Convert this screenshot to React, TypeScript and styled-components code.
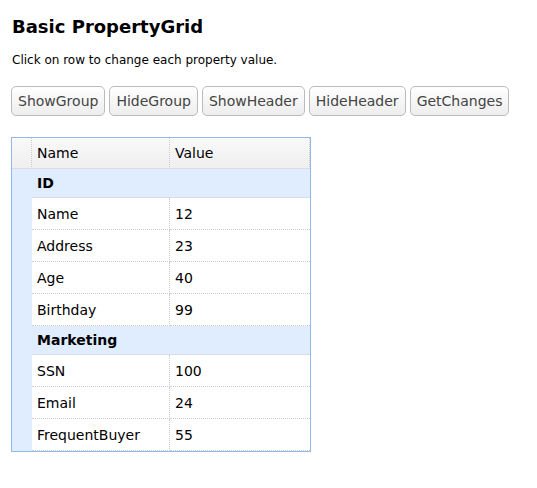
import * as React from 'react';
import styled, { createGlobalStyle } from 'styled-components';

const GlobalStyle = createGlobalStyle`
  body {
    margin: 0;
    padding: 0 11px;
    background: #fff;
    font-family: "DejaVu Sans", Verdana, sans-serif;
    color: #000;
  }
`;

const Page = styled.div`
  display: flex;
  flex-direction: column;
  padding-top: 16px;
`;

const Title = styled.h2`
  margin: 0;
  font-size: 18px;
  font-weight: bold;
  line-height: 22px;
  padding-left: 1px;
`;

const Intro = styled.p`
  margin: 14px 0 0 1px;
  font-size: 12px;
  line-height: 16px;
`;

const Toolbar = styled.div`
  display: flex;
  gap: 4px;
  margin-top: 18px;
`;

const Button = styled.button`
  height: 30px;
  padding: 0 6px;
  font-family: inherit;
  font-size: 14px;
  color: #444;
  background: linear-gradient(to bottom, #ffffff 0%, #ededed 100%);
  border: 1px solid #bbb;
  border-radius: 5px;
  cursor: pointer;
`;

const Grid = styled.div`
  width: 298px;
  margin-top: 21px;
  border: 1px solid #95b8e7;
  display: grid;
  grid-template-columns: 20px 138px 1fr;
  font-size: 14px;
`;

const HeadCell = styled.div`
  height: 31px;
  display: flex;
  align-items: center;
  padding-left: 5px;
  background: linear-gradient(to bottom, #f9f9f9 0%, #efefef 100%);
  border-right: 1px dotted #ccc;
  border-bottom: 1px solid #dddddd;
  box-sizing: border-box;
  &:last-child {
    border-right: none;
  }
`;

const Corner = styled(HeadCell)`
  padding: 0;
`;

const Indent = styled.div`
  background: #e0ecff;
`;

const GroupRow = styled.div`
  grid-column: 2 / 4;
  height: 28px;
  display: flex;
  align-items: center;
  padding-left: 5px;
  background: #e0ecff;
  font-weight: bold;
  border-bottom: 1px solid #d5dde8;
`;

const Cell = styled.div<{ $last?: boolean }>`
  height: 32px;
  box-sizing: border-box;
  display: flex;
  align-items: center;
  padding-left: 5px;
  background: #fff;
  border-bottom: 1px dotted #ccc;
  border-right: ${({ $last }) => ($last ? 'none' : '1px dotted #ccc')};
`;

type Row = { name: string; value: string };
type Group = { title: string; rows: Row[] };

const groups: Group[] = [
  {
    title: 'ID',
    rows: [
      { name: 'Name', value: '12' },
      { name: 'Address', value: '23' },
      { name: 'Age', value: '40' },
      { name: 'Birthday', value: '99' },
    ],
  },
  {
    title: 'Marketing',
    rows: [
      { name: 'SSN', value: '100' },
      { name: 'Email', value: '24' },
      { name: 'FrequentBuyer', value: '55' },
    ],
  },
];

const buttons = ['ShowGroup', 'HideGroup', 'ShowHeader', 'HideHeader', 'GetChanges'];

export default function App() {
  return (
    <Page>
      <GlobalStyle />
      <Title>Basic PropertyGrid</Title>
      <Intro>Click on row to change each property value.</Intro>
      <Toolbar>
        {buttons.map((b) => (
          <Button key={b}>{b}</Button>
        ))}
      </Toolbar>
      <Grid>
        <Corner />
        <HeadCell>Name</HeadCell>
        <HeadCell>Value</HeadCell>
        {groups.map((g) => (
          <React.Fragment key={g.title}>
            <Indent />
            <GroupRow>{g.title}</GroupRow>
            {g.rows.map((r) => (
              <React.Fragment key={r.name}>
                <Indent />
                <Cell>{r.name}</Cell>
                <Cell $last>{r.value}</Cell>
              </React.Fragment>
            ))}
          </React.Fragment>
        ))}
      </Grid>
    </Page>
  );
}
